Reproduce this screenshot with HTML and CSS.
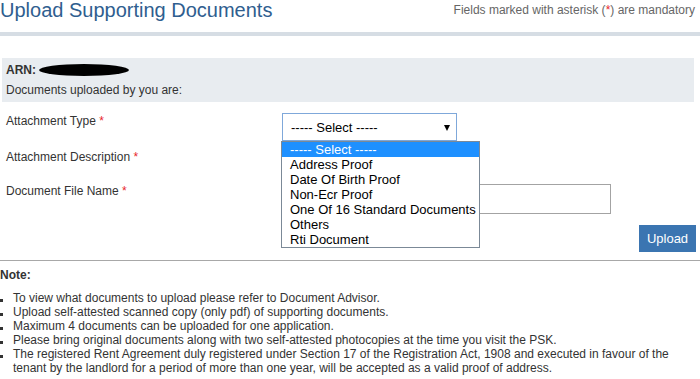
FILE: index.html
```html
<!DOCTYPE html>
<html lang="en">
<head>
<meta charset="utf-8">
<title>Upload Supporting Documents</title>
<link rel="stylesheet" href="styles.css">
</head>
<body>
<div class="page">
  <header class="head">
    <h1 class="title">Upload Supporting Documents</h1>
    <p class="mandatory">Fields marked with asterisk (<span class="req">*</span>) are mandatory</p>
  </header>
  <div class="rule"></div>

  <section class="info">
    <div class="arn"><b>ARN:</b> <span class="redact"></span></div>
    <div>Documents uploaded by you are:</div>
  </section>

  <form class="form">
    <div class="row row-type">
      <label class="lbl">Attachment Type <span class="req">*</span></label>
      <div class="select-wrap">
        <div class="select"><span>----- Select -----</span><span class="caret"></span></div>
        <ul class="options">
          <li class="active">----- Select -----</li>
          <li>Address Proof</li>
          <li>Date Of Birth Proof</li>
          <li>Non-Ecr Proof</li>
          <li>One Of 16 Standard Documents</li>
          <li>Others</li>
          <li>Rti Document</li>
        </ul>
      </div>
    </div>
    <div class="row row-desc">
      <label class="lbl">Attachment Description <span class="req">*</span></label>
      <div class="field desc"></div>
    </div>
    <div class="row row-file">
      <label class="lbl">Document File Name <span class="req">*</span></label>
      <div class="field file"></div>
    </div>
    <div class="actions"><button type="button" class="btn">Upload</button></div>
  </form>

  <hr class="sep">

  <section class="notes">
    <p class="note-title">Note:</p>
    <ul class="note-list">
      <li>To view what documents to upload please refer to Document Advisor.</li>
      <li>Upload self-attested scanned copy (only pdf) of supporting documents.</li>
      <li>Maximum 4 documents can be uploaded for one application.</li>
      <li>Please bring original documents along with two self-attested photocopies at the time you visit the PSK.</li>
      <li>The registered Rent Agreement duly registered under Section 17 of the Registration Act, 1908 and executed in favour of the tenant by the landlord for a period of more than one year, will be accepted as a valid proof of address.</li>
    </ul>
  </section>
</div>
</body>
</html>
```

FILE: styles.css
```css
html, body {
  margin: 0;
  padding: 0;
  background: #fff;
}
body {
  font-family: "Liberation Sans", Arial, sans-serif;
  color: #333;
  overflow: hidden;
}
.page {
  width: 700px;
}
.head {
  height: 32px;
  display: flex;
  justify-content: space-between;
  align-items: flex-start;
}
.title {
  margin: 0;
  font-size: 20px;
  line-height: 20px;
  font-weight: normal;
  color: #2f5e8f;
}
.mandatory {
  margin: 0;
  padding: 2px 5px 0 0;
  font-size: 12px;
  line-height: 16px;
  color: #666;
}
.req {
  color: #e8262c;
}
.rule {
  height: 4px;
  background: #d6dde4;
}
.info {
  margin: 22px 6px 0 2px;
  padding: 2px 4px;
  background: #e8ecf0;
  font-size: 12px;
  line-height: 20px;
  color: #333;
}
.arn b {
  color: #333;
}
.redact {
  display: inline-block;
  width: 90px;
  height: 12px;
  background: #000;
  border-radius: 50%;
  vertical-align: -2px;
}
.form {
  padding-top: 11px;
}
.row {
  display: flex;
  align-items: flex-start;
  margin-bottom: 8px;
}
.lbl {
  flex: none;
  width: 276px;
  padding-left: 6px;
  font-size: 12px;
  line-height: 16px;
  color: #333;
}
.row-type {
  height: 28px;
}
.select-wrap {
  position: relative;
  width: 175px;
}
.select {
  box-sizing: border-box;
  height: 28px;
  border: 1px solid #7fa8da;
  display: flex;
  align-items: center;
  justify-content: space-between;
  padding: 0 6px 0 8px;
  font-size: 13px;
  color: #000;
  background: #fff;
}
.caret {
  width: 0;
  height: 0;
  border-left: 3.5px solid transparent;
  border-right: 3.5px solid transparent;
  border-top: 6px solid #000;
  margin-top: 1px;
}
.options {
  position: absolute;
  top: 100%;
  left: -1px;
  z-index: 2;
  box-sizing: border-box;
  width: 199px;
  margin: 0;
  padding: 0;
  list-style: none;
  border: 1px solid #7b8997;
  background: #fff;
}
.options li {
  height: 15px;
  line-height: 15px;
  padding-left: 8px;
  font-size: 13px;
  color: #000;
  white-space: nowrap;
}
.options li.active {
  background: #1e90ff;
  color: #fff;
}
.row-desc {
  height: 26px;
}
.field {
  box-sizing: border-box;
  border: 1px solid #a3a3a3;
  background: #fff;
}
.desc {
  width: 175px;
  height: 26px;
}
.row-file {
  margin-bottom: 11px;
}
.file {
  width: 329px;
  height: 30px;
  margin-top: 1px;
}
.actions {
  display: flex;
  justify-content: flex-end;
  padding-right: 4px;
}
.btn {
  width: 57px;
  height: 27px;
  padding: 0;
  border: none;
  background: #3b75b1;
  color: #fff;
  font-family: "Liberation Sans", Arial, sans-serif;
  font-size: 13px;
}
.sep {
  margin: 8px 0 0;
  height: 0;
  border: 0;
  border-top: 1px solid #a8a8a8;
}
.notes {
  padding-top: 7px;
}
.note-title {
  margin: 0;
  font-size: 12px;
  line-height: 14px;
  font-weight: bold;
  color: #333;
}
.note-list {
  margin: 9px 0 0;
  padding: 0;
  list-style: none;
  font-size: 12px;
  line-height: 14px;
  color: #333;
}
.note-list li {
  display: flex;
}
.note-list li::before {
  content: "";
  flex: none;
  width: 3px;
  height: 3px;
  background: #333;
  margin: 8px 10px 0 0;
}
```
